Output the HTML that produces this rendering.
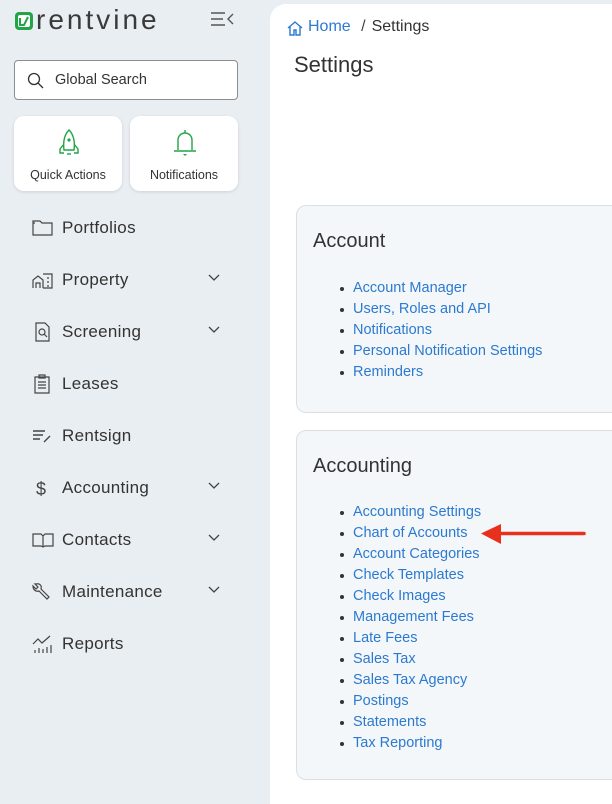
<!DOCTYPE html>
<html><head><meta charset="utf-8"><style>
*{margin:0;padding:0;box-sizing:border-box}
body{width:612px;height:783px;overflow:hidden;background:#e9eef2;font-family:"Liberation Sans","DejaVu Sans",sans-serif;position:relative}
.abs{position:absolute}
.logo{left:36px;top:4px;font-size:28px;color:#3a3a3a;letter-spacing:3px;font-weight:normal}
.search{left:14px;top:60px;width:224px;height:40px;border:1px solid #8a8f94;border-radius:4px;background:#fff}
.search span{position:absolute;left:40px;top:11px;font-size:14.5px;color:#333}
.tile{top:116px;width:108px;height:75px;background:#fff;border-radius:10px;box-shadow:0 1px 3px rgba(0,0,0,.12)}
.tile span{position:absolute;bottom:9px;left:0;right:0;text-align:center;font-size:12.5px;color:#333}
.nav{left:32px;width:200px;height:24px}
.nav svg{position:absolute;left:0;top:2px}
.nav span{position:absolute;left:30px;top:2px;font-size:17px;color:#333;letter-spacing:.3px}
.nav .ch{position:absolute;left:176px;top:6px}
.main{left:270px;top:4px;width:360px;height:800px;background:#fff;border-radius:16px 0 0 0}
.card{left:296px;width:330px;background:#f4f7fa;border:1px solid #dcdfe2;border-radius:10px}
.card h2{position:absolute;left:16px;font-size:20px;font-weight:normal;color:#333}
.card ul{position:absolute;left:56px;list-style:none}
.card li{font-size:14.5px;line-height:21px;color:#2c7ad0;position:relative}
.card li:before{content:"";position:absolute;left:-13px;top:9px;width:4px;height:4px;border-radius:50%;background:#333}
</style></head><body>
<div class="abs" style="left:15px;top:12px;width:18px;height:18px;background:#22a447;border-radius:4px"></div>
<div class="abs" style="left:18px;top:15px;width:12px;height:12px;background:#fff;border-radius:2px"></div>
<svg class="abs" style="left:18px;top:15px" width="12" height="12"><path d="M2 3v7h4l4-8" stroke="#22a447" stroke-width="2" fill="none"/></svg>
<div class="abs logo">rentvine</div>
<svg class="abs" style="left:210px;top:11px" width="25" height="18"><path d="M1 2h14M1 8h12M1 14h14M23 3l-5 5 5 5" stroke="#555" stroke-width="1.4" fill="none"/></svg>
<div class="abs search"><svg class="abs" style="left:12px;top:11px" width="18" height="18"><circle cx="7" cy="7" r="5.5" stroke="#333" stroke-width="1.3" fill="none"/><path d="M11 11l5 5" stroke="#333" stroke-width="1.3"/></svg><span>Global Search</span></div>
<div class="abs tile" style="left:14px"><svg class="abs" style="left:44px;top:12px" width="22" height="32"><path d="M11 2c-5 5-6 12-5 20h10c1-8 0-15-5-20zM6 16l-4 5v4h4M16 16l4 5v4h-4" stroke="#22a447" stroke-width="1.4" fill="none"/><circle cx="11" cy="12" r="1.6" fill="#22a447"/><path d="M9 26h4" stroke="#22a447" stroke-width="1.4"/></svg><span>Quick Actions</span></div>
<div class="abs tile" style="left:130px"><svg class="abs" style="left:42px;top:12px" width="26" height="32"><path d="M13 2v3M6 22V12a7 7 0 0 1 14 0v10M2 23h22" stroke="#22a447" stroke-width="1.4" fill="none"/><path d="M11 26h4l-2 2z" fill="#22a447"/></svg><span>Notifications</span></div>

<div class="abs nav" style="top:216px"><svg width="22" height="20"><path d="M1 3h7l2 2h10v12H1zM1 17V6M3 5h-2" stroke="#444" stroke-width="1.2" fill="none"/></svg><span>Portfolios</span></div>
<div class="abs nav" style="top:268px"><svg width="22" height="20"><path d="M1 18V10l5-4 5 4v8M4 18v-5h4v5M11 4h9v14h-9M15 8h2M15 12h2M15 16h2" stroke="#444" stroke-width="1.2" fill="none"/></svg><span>Property</span><svg class="ch" width="12" height="8"><path d="M1 1l5 5 5-5" stroke="#444" stroke-width="1.3" fill="none"/></svg></div>
<div class="abs nav" style="top:320px"><svg width="22" height="20"><path d="M4 1h9l4 4v14H4z" stroke="#444" stroke-width="1.2" fill="none"/><circle cx="10" cy="10" r="3" stroke="#444" stroke-width="1.2" fill="none"/><path d="M12 12l3 3" stroke="#444" stroke-width="1.2"/></svg><span>Screening</span><svg class="ch" width="12" height="8"><path d="M1 1l5 5 5-5" stroke="#444" stroke-width="1.3" fill="none"/></svg></div>
<div class="abs nav" style="top:372px"><svg width="22" height="20"><path d="M3 3h14v16H3zM7 1h6v3H7zM6 8h8M6 11h8M6 14h8" stroke="#444" stroke-width="1.2" fill="none"/></svg><span>Leases</span></div>
<div class="abs nav" style="top:424px"><svg width="22" height="20"><path d="M1 5h12M1 9h10M1 13h7M12 16l6-6" stroke="#444" stroke-width="1.4" fill="none"/></svg><span>Rentsign</span></div>
<div class="abs nav" style="top:476px"><svg width="22" height="20"><text x="4" y="17" font-size="18" fill="#444" font-family="Liberation Sans">$</text></svg><span>Accounting</span><svg class="ch" width="12" height="8"><path d="M1 1l5 5 5-5" stroke="#444" stroke-width="1.3" fill="none"/></svg></div>
<div class="abs nav" style="top:528px"><svg width="22" height="20"><path d="M1 4h8l2 2 2-2h8v12h-8l-2 1-2-1H1zM11 6v11" stroke="#444" stroke-width="1.2" fill="none"/></svg><span>Contacts</span><svg class="ch" width="12" height="8"><path d="M1 1l5 5 5-5" stroke="#444" stroke-width="1.3" fill="none"/></svg></div>
<div class="abs nav" style="top:580px"><svg width="22" height="20"><path d="M3 2l3 3-2 2-3-3c0 4 3 6 6 5l8 8 2-2-8-8c1-3-1-6-5-5z" stroke="#444" stroke-width="1.2" fill="none"/></svg><span>Maintenance</span><svg class="ch" width="12" height="8"><path d="M1 1l5 5 5-5" stroke="#444" stroke-width="1.3" fill="none"/></svg></div>
<div class="abs nav" style="top:632px"><svg width="22" height="20"><path d="M1 10l5-5 4 4 8-7M3 19v-3M7 19v-5M11 19v-4M15 19v-6M19 19v-8" stroke="#444" stroke-width="1.2" fill="none"/></svg><span>Reports</span></div>

<div class="abs main"></div>
<svg class="abs" style="left:287px;top:20px" width="16" height="16"><path d="M1 8l7-6 7 6M3 6v9h4v-5h2v5h4V6" stroke="#2c7ad0" stroke-width="1.4" fill="none"/></svg>
<div class="abs" style="left:308px;top:18px;font-size:16px;color:#2c7ad0">Home <span style="color:#444;margin:0 6px">/</span><span style="color:#333">Settings</span></div>
<div class="abs" style="left:294px;top:52px;font-size:22px;color:#333">Settings</div>

<div class="abs card" style="top:205px;height:208px"><h2 style="top:24px">Account</h2>
<ul style="top:72px"><li>Account Manager</li><li>Users, Roles and API</li><li>Notifications</li><li>Personal Notification Settings</li><li>Reminders</li></ul></div>
<div class="abs card" style="top:430px;height:350px"><h2 style="top:24px">Accounting</h2>
<ul style="top:71px"><li>Accounting Settings</li><li>Chart of Accounts</li><li>Account Categories</li><li>Check Templates</li><li>Check Images</li><li>Management Fees</li><li>Late Fees</li><li>Sales Tax</li><li>Sales Tax Agency</li><li>Postings</li><li>Statements</li><li>Tax Reporting</li></ul></div>
<svg class="abs" style="left:478px;top:522px" width="110" height="26"><path d="M20 11.5h86" stroke="#e8301c" stroke-width="3.5" stroke-linecap="round"/><path d="M3 11.5L23 2v20z" fill="#e8301c"/></svg>
</body></html>
